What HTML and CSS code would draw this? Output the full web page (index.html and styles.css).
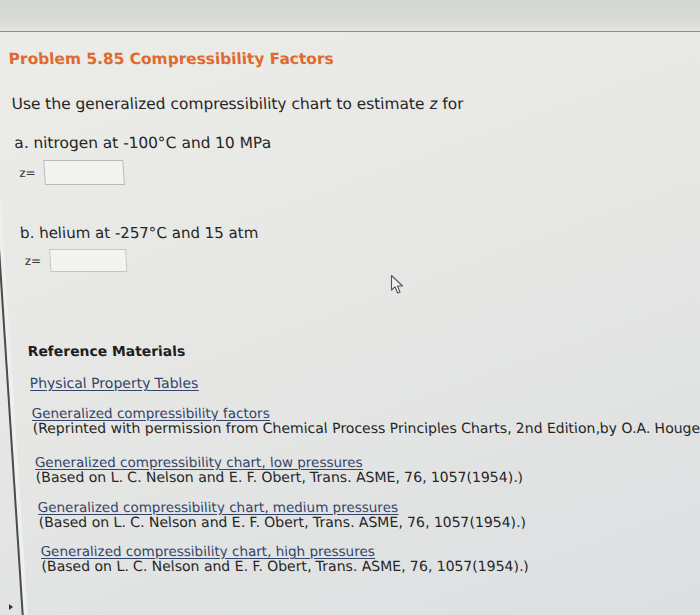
FILE: index.html
```html
<!DOCTYPE html>
<html lang="en">
<head>
<meta charset="utf-8">
<title>Problem 5.85 Compressibility Factors</title>
<link rel="stylesheet" href="styles.css">
</head>
<body>
<div class="screen">
  <div class="topbar"></div>
  <div class="sheet">
    <div class="content">
      <h1 class="title">Problem 5.85 Compressibility Factors</h1>
      <p class="intro">Use the generalized compressibility chart to estimate <i>z</i> for</p>
      <div class="part">
        <p class="question question-a">a. nitrogen at -100°C and 10 MPa</p>
        <div class="answer"><span class="zlabel">z=</span><span class="box box-a"></span></div>
      </div>
      <div class="part part-b">
        <p class="question">b. helium at -257°C and 15 atm</p>
        <div class="answer answer-b"><span class="zlabel">z=</span><span class="box box-b"></span></div>
      </div>
      <div class="refs">
        <h2 class="refs-title">Reference Materials</h2>
        <div class="ref ref-first"><a class="link" href="#">Physical Property Tables</a></div>
        <div class="ref ref-factors"><a class="link" href="#">Generalized compressibility factors</a><span class="note">(Reprinted with permission from Chemical Process Principles Charts, 2nd Edition,by O.A. Hougen, K.M. Watson and R.A. Ragatz)</span></div>
        <div class="ref ref-low"><a class="link" href="#">Generalized compressibility chart, low pressures</a><span class="note">(Based on L. C. Nelson and E. F. Obert, Trans. ASME, 76, 1057(1954).)</span></div>
        <div class="ref ref-medium"><a class="link" href="#">Generalized compressibility chart, medium pressures</a><span class="note">(Based on L. C. Nelson and E. F. Obert, Trans. ASME, 76, 1057(1954).)</span></div>
        <div class="ref ref-high"><a class="link" href="#">Generalized compressibility chart, high pressures</a><span class="note">(Based on L. C. Nelson and E. F. Obert, Trans. ASME, 76, 1057(1954).)</span></div>
      </div>
    </div>
  </div>
  <svg class="cursor" width="14" height="22" viewBox="0 0 14 22" aria-hidden="true">
    <path d="M1.5 1.5 L1.5 16 L5 12.8 L7.6 19 L10 18 L7.5 12 L12.5 12 Z" fill="#f2f2f0" stroke="#555" stroke-width="1.1" stroke-linejoin="round"/>
  </svg>
  <span class="marker"></span>
</div>
</body>
</html>
```
FILE: styles.css
```css
html, body {
  margin: 0;
  padding: 0;
}
body {
  width: 700px;
  height: 615px;
  overflow: hidden;
  background: #e6e7e4;
  font-family: "DejaVu Sans", Verdana, sans-serif;
  color: #262626;
}
.screen {
  position: relative;
  width: 700px;
  height: 615px;
  overflow: hidden;
  display: flex;
  flex-direction: column;
  background: linear-gradient(160deg, #ecece8 0%, #e7e8e5 45%, #dcdfe1 100%);
}
.topbar {
  height: 31px;
  flex: none;
  background: linear-gradient(180deg, #d4d6d4 0%, #d8dad8 60%, #e4e5e2 100%);
  border-bottom: 1.5px solid #8e908e;
}
.sheet {
  flex: 1;
  overflow: hidden;
}
.content {
  margin-left: -16px;
  padding-left: 21px;
  padding-top: 15px;
  height: 100%;
  border-left: 2px solid #4a4c4e;
  box-shadow: inset 10px 0 0 -6px #eef0ee;
  transform: skewX(3.7deg);
  transform-origin: 0 0;
}
.title {
  margin: 0;
  font-size: 15.4px;
  font-weight: bold;
  color: #e0692e;
  line-height: 24px;
  white-space: nowrap;
}
.intro {
  margin: 22px 0 0;
  font-size: 15.4px;
  line-height: 22px;
  white-space: nowrap;
}
.part {
  margin-top: 18px;
}
.question {
  margin: 0;
  font-size: 15px;
  line-height: 20px;
  white-space: nowrap;
}
.question-a {
  font-size: 15.4px;
}
.answer {
  display: flex;
  align-items: center;
  gap: 9px;
  margin-top: 7px;
  padding-left: 3px;
}
.answer-b {
  margin-top: 6px;
}
.zlabel {
  font-size: 12px;
  color: #333;
}
.box {
  display: block;
  width: 80px;
  height: 25px;
  background: #f3f3f1;
  border: 1px solid #b9bab8;
  box-sizing: border-box;
}
.part-b {
  margin-top: 38px;
}
.box-b {
  width: 77px;
  height: 23px;
  border-color: #c6c7c4;
}
.refs {
  margin-top: 70px;
}
.refs-title {
  margin: 0;
  font-size: 13.9px;
  font-weight: bold;
  line-height: 18px;
  color: #1e1e1e;
}
.ref {
  margin-top: 16px;
  font-size: 14px;
  line-height: 15px;
  white-space: nowrap;
  display: flex;
  flex-direction: column;
  align-items: flex-start;
}
.ref-factors {
  margin-top: 15px;
}
.ref-low {
  margin-top: 19px;
}
.ref-medium {
  margin-top: 15px;
}
.ref-high {
  margin-top: 14px;
}
.link {
  font-size: 13.5px;
  color: #34446a;
  text-decoration: underline;
  text-underline-offset: 2px;
}
.ref-first .link {
  font-size: 14px;
}
.note {
  color: #262626;
}
.cursor {
  position: absolute;
  left: 390px;
  top: 274px;
}
.marker {
  position: absolute;
  left: 9px;
  top: 604px;
  width: 0;
  height: 0;
  border-top: 3px solid transparent;
  border-bottom: 3px solid transparent;
  border-left: 4px solid #333;
}
```
